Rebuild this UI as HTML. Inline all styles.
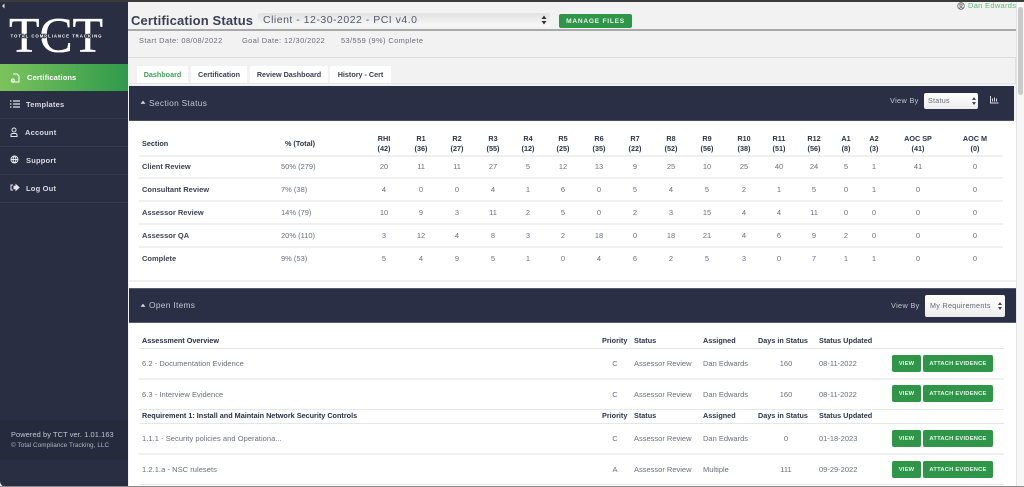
<!DOCTYPE html>
<html><head><meta charset="utf-8"><style>
html,body{margin:0;padding:0;background:#f2f2f2}
#w{left:0;top:0;width:1024px;height:487px;overflow:hidden;background:#f2f2f2;font-family:"Liberation Sans",sans-serif;font-size:7.5px;color:#6a6d7c;filter:blur(.3px)}
body{width:1024px;height:487px;overflow:hidden;position:relative}
div,span,svg{position:absolute;box-sizing:border-box}
span{white-space:nowrap;line-height:10px}
.c{transform:translateX(-50%);text-align:center}
.h{font-weight:700;color:#2f3347;line-height:9.5px;font-size:7.25px}
.s{color:#3f4254;font-weight:700}
.g{background:#2f9649;border-radius:2px;color:#e8f5ea;font-weight:700;font-size:5.8px;letter-spacing:.2px;text-align:center;line-height:18px;height:17px}
.m{left:0;width:128px;height:28px;border-bottom:1px solid #343950}
.m span{color:#d8dae2;font-weight:700;font-size:7.5px;letter-spacing:.2px;top:9px}
.m svg{left:10px;top:8px}
.ln{left:139px;height:2px;background:#f0f0f0}
.t{left:139px;height:1px;background:#e6e6e6}
.tab{top:66px;height:17px;background:#fff;color:#3a3e50;font-weight:700;font-size:7.2px;text-align:center;line-height:17px}
.dark{background:#2a2f45;height:35px}
.d{top:36px;font-size:7.4px;letter-spacing:.42px;color:#6a6c78}
</style></head><body><div id="w">
<div style="left:0;top:0;width:1024px;height:2px;background:#3a3a3a"></div>
<div style="left:128px;top:29px;width:888px;height:2px;background:#a9a9a9"></div>
<div style="left:128px;top:57px;width:888px;height:1px;background:#dcdcdc"></div>

<!-- sidebar -->
<div style="left:0;top:2px;width:128px;height:485px;background:#2a2e43;border-radius:0 0 0 6px"></div>
<svg style="left:1px;top:2px" width="5" height="8"><path d="M3.5 1.5v5L1 4z" fill="#ddd"/></svg>
<svg style="left:0;top:8px" width="128" height="56" viewBox="0 0 128 56">
<text x="9" y="43.500" font-family="Liberation Serif" font-size="50" fill="#fff" stroke="#fff" stroke-width=".3" textLength="94" lengthAdjust="spacing">TCT</text>
<text x="10.500" y="29.500" font-family="Liberation Sans" font-weight="700" font-size="4.3" fill="#fff" stroke="#2a2e43" stroke-width="1.6" paint-order="stroke" textLength="91">TOTAL COMPLIANCE TRACKING</text>
</svg>
<div style="left:0;top:64px;width:128px;height:27px;background:linear-gradient(90deg,#7cc35c,#2f9a4c)"></div>
<div class="m" style="top:64px;height:27px;border:0"><svg width="10" height="12" viewBox="0 0 10 12" fill="none" stroke="#fff" stroke-width="1"><path d="M3 2h4l2 2v6H2V7"/><circle cx="2.800" cy="8.500" r="1.500"/></svg><span style="left:27px;color:#fff;letter-spacing:.1px">Certifications</span></div>
<div class="m" style="top:91px"><svg width="10" height="10" viewBox="0 0 10 10" stroke="#e4e6ec" stroke-width="1.200" fill="none"><path d="M3 2h7M3 5h7M3 8h7M0 2h1.500M0 5h1.500M0 8h1.500"/></svg><span style="left:26px">Templates</span></div>
<div class="m" style="top:119px"><svg width="10" height="10" viewBox="0 0 10 10" stroke="#e4e6ec" stroke-width="1" fill="none"><circle cx="4" cy="3" r="2"/><path d="M1 9.500V8q0-1.500 1.500-1.500h3Q7 6.500 7 8v1.500z"/></svg><span style="left:25px">Account</span></div>
<div class="m" style="top:147px"><svg width="10" height="10" viewBox="0 0 10 10" stroke="#e4e6ec" stroke-width="1" fill="none"><circle cx="4.500" cy="4.500" r="3.500"/><path d="M1 4.500h7M4.500 1q-3 3.500 0 7M4.500 1q3 3.500 0 7"/></svg><span style="left:26px">Support</span></div>
<div class="m" style="top:175px"><svg width="10" height="10" viewBox="0 0 10 10" stroke="#e4e6ec" stroke-width="1" fill="none"><path d="M3 2H1v5h2"/><path d="M4 3.200h2V1.800l3 2.700-3 2.700V5.800H4z" fill="#e4e6ec"/></svg><span style="left:26px">Log Out</span></div>
<div style="left:0;top:420px;width:128px;height:40px;background:#262a3d"></div>
<span style="left:11px;top:430px;color:#c4c6d0;font-size:7.400px;letter-spacing:.1px">Powered by TCT ver. 1.01.163</span>
<span style="left:11px;top:441px;color:#b0b3bf;font-size:6.400px;letter-spacing:.05px">© Total Compliance Tracking, LLC</span>

<!-- header -->
<span style="left:131px;top:13px;font-size:13px;line-height:15px;font-weight:700;color:#3a3f55;letter-spacing:.15px">Certification Status</span>
<div style="left:258px;top:13px;width:292px;height:14px;background:linear-gradient(#e2e2e2,#f9f9f9);border-radius:2px"></div>
<span style="left:263px;top:15px;font-size:10.500px;line-height:11px;color:#55586a;letter-spacing:.5px">Client - 12-30-2022 - PCI v4.0</span>
<svg style="left:541px;top:15px" width="6" height="10"><path d="M3 .5L5.500 4h-5zM3 9.500L.5 6h5z" fill="#333"/></svg>
<div class="g" style="left:559px;top:14px;width:73px;height:14px;line-height:15px;font-size:6.600px;letter-spacing:.75px">MANAGE FILES</div>
<svg style="left:957px;top:2px" width="8" height="8" viewBox="0 0 8 8" fill="none" stroke="#666" stroke-width=".8"><circle cx="4" cy="4" r="3.300"/><circle cx="4" cy="3.200" r="1.200"/><path d="M2 6.500q2-2 4 0"/></svg>
<span style="left:968px;top:1px;color:#5fb777;font-size:7.500px;letter-spacing:.3px">Dan Edwards</span>
<span class="d" style="left:139px">Start Date: 08/08/2022</span>
<span class="d" style="left:242px">Goal Date: 12/30/2022</span>
<span class="d" style="left:341px">53/559 (9%) Complete</span>

<!-- tabs -->
<div style="left:129px;top:57px;width:887px;height:27px;border-right:1px solid #dedede;border-bottom:1px solid #e6e6e6;border-radius:0 2px 0 0"></div>
<div class="tab" style="left:137px;width:51px;color:#3f9e58">Dashboard</div>
<div class="tab" style="left:191px;width:56px">Certification</div>
<div class="tab" style="left:250px;width:78px">Review Dashboard</div>
<div class="tab" style="left:330px;width:61px">History - Cert</div>

<!-- scrollbar -->
<div style="left:1016px;top:2px;width:8px;height:485px;background:#f7f7f7;border-left:1px solid #e2e2e2"></div>
<div style="left:1018px;top:7px;width:5px;height:88px;background:#cacaca;border-radius:3px"></div>

<!-- Section status -->
<div style="left:129px;top:120px;width:887px;height:169px;background:#fff"></div>
<div class="dark" style="left:129px;top:86px;width:885px;border-bottom:1px solid #4a4f63"></div>
<svg style="left:140px;top:100px" width="6" height="5"><path d="M3 .8L5.500 3.800H.5z" fill="#ddd"/></svg>
<span style="left:149px;top:98px;color:#c3c6d0;font-size:8.400px;letter-spacing:.3px">Section Status</span>
<span style="left:890px;top:96px;color:#c3c6d0;font-size:7.300px;letter-spacing:.35px">View By</span>
<div style="left:924px;top:93px;width:54px;height:16px;background:linear-gradient(#fff,#ececec);border-radius:2px"></div>
<span style="left:928px;top:96px;color:#686a76;font-size:7.200px;letter-spacing:.25px">Status</span>
<svg style="left:972px;top:97px" width="4" height="8"><path d="M2 0L4 3H0zM2 8L0 5h4z" fill="#444"/></svg>
<svg style="left:990px;top:95px" width="9" height="9" viewBox="0 0 9 9" fill="none" stroke="#d6d8df" stroke-width="1"><path d="M.5 1v7h8M2.500 6.500V3.500M4.500 6.500V2.500M6.500 6.500V3.500"/></svg>

<span class="h" style="left:142px;top:139px">Section</span>
<span class="h c" style="left:300px;top:139px">% (Total)</span>
<span class="h c" style="left:384px;top:134px">RHI<br>(42)</span><span class="h c" style="left:421px;top:134px">R1<br>(36)</span><span class="h c" style="left:457px;top:134px">R2<br>(27)</span><span class="h c" style="left:493px;top:134px">R3<br>(55)</span><span class="h c" style="left:528px;top:134px">R4<br>(12)</span><span class="h c" style="left:563px;top:134px">R5<br>(25)</span><span class="h c" style="left:599px;top:134px">R6<br>(35)</span><span class="h c" style="left:635px;top:134px">R7<br>(22)</span><span class="h c" style="left:671px;top:134px">R8<br>(52)</span><span class="h c" style="left:707px;top:134px">R9<br>(56)</span><span class="h c" style="left:744px;top:134px">R10<br>(38)</span><span class="h c" style="left:779px;top:134px">R11<br>(51)</span><span class="h c" style="left:814px;top:134px">R12<br>(56)</span><span class="h c" style="left:846px;top:134px">A1<br>(8)</span><span class="h c" style="left:874px;top:134px">A2<br>(3)</span><span class="h c" style="left:918px;top:134px">AOC SP<br>(41)</span><span class="h c" style="left:975px;top:134px">AOC M<br>(0)</span>

<div class="ln" style="top:155px;width:864px"></div><div class="ln" style="top:177px;width:864px"></div><div class="ln" style="top:200px;width:864px"></div><div class="ln" style="top:223px;width:864px"></div><div class="ln" style="top:246px;width:864px"></div>
<div class="ln" style="top:280px;left:129px;width:887px"></div>

<span class="s" style="left:142px;top:162px">Client Review</span><span style="left:281px;top:162px">50% (279)</span>
<span class="s" style="left:142px;top:185px">Consultant Review</span><span style="left:281px;top:185px">7% (38)</span>
<span class="s" style="left:142px;top:208px">Assessor Review</span><span style="left:281px;top:208px">14% (79)</span>
<span class="s" style="left:142px;top:231px">Assessor QA</span><span style="left:281px;top:231px">20% (110)</span>
<span class="s" style="left:142px;top:254px">Complete</span><span style="left:281px;top:254px">9% (53)</span>

<span class="c" style="left:384px;top:162px">20</span><span class="c" style="left:421px;top:162px">11</span><span class="c" style="left:457px;top:162px">11</span><span class="c" style="left:493px;top:162px">27</span><span class="c" style="left:528px;top:162px">5</span><span class="c" style="left:563px;top:162px">12</span><span class="c" style="left:599px;top:162px">13</span><span class="c" style="left:635px;top:162px">9</span><span class="c" style="left:671px;top:162px">25</span><span class="c" style="left:707px;top:162px">10</span><span class="c" style="left:744px;top:162px">25</span><span class="c" style="left:779px;top:162px">40</span><span class="c" style="left:814px;top:162px">24</span><span class="c" style="left:846px;top:162px">5</span><span class="c" style="left:874px;top:162px">1</span><span class="c" style="left:918px;top:162px">41</span><span class="c" style="left:975px;top:162px">0</span>
<span class="c" style="left:384px;top:185px">4</span><span class="c" style="left:421px;top:185px">0</span><span class="c" style="left:457px;top:185px">0</span><span class="c" style="left:493px;top:185px">4</span><span class="c" style="left:528px;top:185px">1</span><span class="c" style="left:563px;top:185px">6</span><span class="c" style="left:599px;top:185px">0</span><span class="c" style="left:635px;top:185px">5</span><span class="c" style="left:671px;top:185px">4</span><span class="c" style="left:707px;top:185px">5</span><span class="c" style="left:744px;top:185px">2</span><span class="c" style="left:779px;top:185px">1</span><span class="c" style="left:814px;top:185px">5</span><span class="c" style="left:846px;top:185px">0</span><span class="c" style="left:874px;top:185px">1</span><span class="c" style="left:918px;top:185px">0</span><span class="c" style="left:975px;top:185px">0</span>
<span class="c" style="left:384px;top:208px">10</span><span class="c" style="left:421px;top:208px">9</span><span class="c" style="left:457px;top:208px">3</span><span class="c" style="left:493px;top:208px">11</span><span class="c" style="left:528px;top:208px">2</span><span class="c" style="left:563px;top:208px">5</span><span class="c" style="left:599px;top:208px">0</span><span class="c" style="left:635px;top:208px">2</span><span class="c" style="left:671px;top:208px">3</span><span class="c" style="left:707px;top:208px">15</span><span class="c" style="left:744px;top:208px">4</span><span class="c" style="left:779px;top:208px">4</span><span class="c" style="left:814px;top:208px">11</span><span class="c" style="left:846px;top:208px">0</span><span class="c" style="left:874px;top:208px">0</span><span class="c" style="left:918px;top:208px">0</span><span class="c" style="left:975px;top:208px">0</span>
<span class="c" style="left:384px;top:231px">3</span><span class="c" style="left:421px;top:231px">12</span><span class="c" style="left:457px;top:231px">4</span><span class="c" style="left:493px;top:231px">8</span><span class="c" style="left:528px;top:231px">3</span><span class="c" style="left:563px;top:231px">2</span><span class="c" style="left:599px;top:231px">18</span><span class="c" style="left:635px;top:231px">0</span><span class="c" style="left:671px;top:231px">18</span><span class="c" style="left:707px;top:231px">21</span><span class="c" style="left:744px;top:231px">4</span><span class="c" style="left:779px;top:231px">6</span><span class="c" style="left:814px;top:231px">9</span><span class="c" style="left:846px;top:231px">2</span><span class="c" style="left:874px;top:231px">0</span><span class="c" style="left:918px;top:231px">0</span><span class="c" style="left:975px;top:231px">0</span>
<span class="c" style="left:384px;top:254px">5</span><span class="c" style="left:421px;top:254px">4</span><span class="c" style="left:457px;top:254px">9</span><span class="c" style="left:493px;top:254px">5</span><span class="c" style="left:528px;top:254px">1</span><span class="c" style="left:563px;top:254px">0</span><span class="c" style="left:599px;top:254px">4</span><span class="c" style="left:635px;top:254px">6</span><span class="c" style="left:671px;top:254px">2</span><span class="c" style="left:707px;top:254px">5</span><span class="c" style="left:744px;top:254px">3</span><span class="c" style="left:779px;top:254px">0</span><span class="c" style="left:814px;top:254px">7</span><span class="c" style="left:846px;top:254px">1</span><span class="c" style="left:874px;top:254px">1</span><span class="c" style="left:918px;top:254px">0</span><span class="c" style="left:975px;top:254px">0</span>

<!-- Open items -->
<div style="left:129px;top:288px;width:887px;height:199px;background:#fff"></div>
<div class="dark" style="left:129px;top:288px;width:887px;border-top:1px solid #555a6c;border-bottom:1px solid #555a6c"></div>
<svg style="left:140px;top:303px" width="6" height="5"><path d="M3 .8L5.500 3.800H.5z" fill="#ddd"/></svg>
<span style="left:149px;top:300px;color:#c3c6d0;font-size:8.400px;letter-spacing:.3px">Open Items</span>
<span style="left:891px;top:301px;color:#c3c6d0;font-size:7.300px;letter-spacing:.35px">View By</span>
<div style="left:925px;top:295px;width:80px;height:22px;background:linear-gradient(#fff,#ececec);border-radius:2px"></div>
<span style="left:930px;top:301px;color:#686a76;font-size:7.200px;letter-spacing:.3px">My Requirements</span>
<svg style="left:998px;top:302px" width="4" height="8"><path d="M2 0L4 3H0zM2 8L0 5h4z" fill="#444"/></svg>

<div class="t" style="top:348px;width:865px"></div><div class="ln" style="top:378px;width:865px"></div><div class="t" style="top:409px;width:865px"></div><div class="t" style="top:423px;width:865px"></div><div class="ln" style="top:453px;width:865px"></div><div class="t" style="top:484px;width:865px"></div>
<div style="left:0;top:486px;width:1024px;height:1px;background:#8a8a8a"></div>

<span class="h" style="left:142px;top:336px;line-height:10px;color:#2a2e43">Assessment Overview</span>
<span class="h" style="left:602px;top:336px;line-height:10px">Priority</span><span class="h" style="left:634px;top:336px;line-height:10px">Status</span><span class="h" style="left:703px;top:336px;line-height:10px">Assigned</span><span class="h" style="left:758px;top:336px;line-height:10px">Days in Status</span><span class="h" style="left:819px;top:336px;line-height:10px">Status Updated</span>
<span class="h" style="left:142px;top:411px;line-height:10px;color:#2a2e43">Requirement 1: Install and Maintain Network Security Controls</span>
<span class="h" style="left:602px;top:411px;line-height:10px">Priority</span><span class="h" style="left:634px;top:411px;line-height:10px">Status</span><span class="h" style="left:703px;top:411px;line-height:10px">Assigned</span><span class="h" style="left:758px;top:411px;line-height:10px">Days in Status</span><span class="h" style="left:819px;top:411px;line-height:10px">Status Updated</span>

<span style="left:142px;top:359px;letter-spacing:.05px">6.2 - Documentation Evidence</span><span class="c" style="left:615px;top:359px">C</span><span style="left:634px;top:359px">Assessor Review</span><span style="left:703px;top:359px">Dan Edwards</span><span class="c" style="left:786px;top:359px">160</span><span style="left:819px;top:359px">08-11-2022</span>
<span style="left:142px;top:390px;letter-spacing:.05px">6.3 - Interview Evidence</span><span class="c" style="left:615px;top:390px">C</span><span style="left:634px;top:390px">Assessor Review</span><span style="left:703px;top:390px">Dan Edwards</span><span class="c" style="left:786px;top:390px">160</span><span style="left:819px;top:390px">08-11-2022</span>
<span style="left:142px;top:434px;letter-spacing:.05px">1.1.1 - Security policies and Operationa...</span><span class="c" style="left:615px;top:434px">C</span><span style="left:634px;top:434px">Assessor Review</span><span style="left:703px;top:434px">Dan Edwards</span><span class="c" style="left:786px;top:434px">0</span><span style="left:819px;top:434px">01-18-2023</span>
<span style="left:142px;top:465px;letter-spacing:.05px">1.2.1.a - NSC rulesets</span><span class="c" style="left:615px;top:465px">A</span><span style="left:634px;top:465px">Assessor Review</span><span style="left:703px;top:465px">Multiple</span><span class="c" style="left:786px;top:465px">111</span><span style="left:819px;top:465px">09-29-2022</span>

<div class="g" style="left:892px;top:355px;width:29px">VIEW</div><div class="g" style="left:923px;top:355px;width:70px">ATTACH EVIDENCE</div>
<div class="g" style="left:892px;top:385px;width:29px">VIEW</div><div class="g" style="left:923px;top:385px;width:70px">ATTACH EVIDENCE</div>
<div class="g" style="left:892px;top:430px;width:29px">VIEW</div><div class="g" style="left:923px;top:430px;width:70px">ATTACH EVIDENCE</div>
<div class="g" style="left:892px;top:461px;width:29px">VIEW</div><div class="g" style="left:923px;top:461px;width:70px">ATTACH EVIDENCE</div>
</div></body></html>
